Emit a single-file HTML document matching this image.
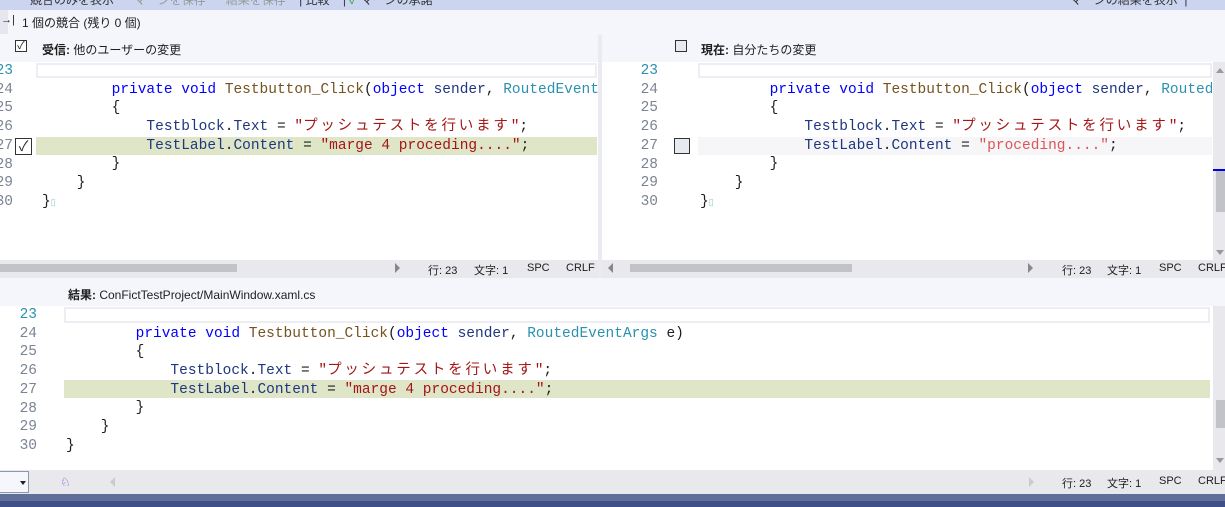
<!DOCTYPE html>
<html><head><meta charset="utf-8">
<style>
*{margin:0;padding:0;box-sizing:border-box}
body{width:1225px;height:507px;overflow:hidden;background:#f5f6fb;position:relative;font-family:"Liberation Sans","Noto Sans CJK JP",sans-serif;font-size:12px;color:#1e1e1e}
.a{position:absolute}
.code{font-family:"Liberation Mono","Noto Sans CJK JP",monospace;font-size:14.5px;line-height:18.7px;white-space:pre;height:18.7px}
.ln{font-family:"Liberation Mono",monospace;font-size:14.5px;line-height:18.7px;color:#7a8494;text-align:right}
.k{color:#0000ff}.m{color:#74531f}.p{color:#1f377f}.t{color:#2b91af}.s{color:#a31515}.j{letter-spacing:2.8px}
.cb{position:absolute;width:12px;height:12px;border:1px solid #333;background:#fff}
.sb{font-size:11px;color:#1e1e1e}
</style></head><body>
<!-- toolbar -->
<div class="a" style="left:0;top:0;width:1225px;height:10px;background:#ccd5f0;overflow:hidden">
<div class="a" style="left:30px;top:-9px;font-size:12px;color:#333;white-space:nowrap">競合のみを表示 &nbsp;&nbsp;&nbsp;&nbsp; <span style="color:#999">マージを保存 &nbsp;&nbsp;&nbsp;&nbsp; 結果を保存</span> &nbsp;&nbsp; | 比較 &nbsp;&nbsp; | <span style="color:#3a3">✓</span> マージの承諾</div>
<div class="a" style="left:1070px;top:-9px;font-size:12px;color:#333;white-space:nowrap">マージの結果を表示 &nbsp;|</div>
</div>
<div class="a" style="left:0;top:10px;width:8px;height:24px;background:#e6e7ee"></div>
<div class="a" style="left:1px;top:14px;font-size:11px">→|</div>
<div class="a" style="left:22px;top:14px;font-size:12px">1 個の競合 (残り 0 個)</div>

<!-- left pane -->
<div class="cb" style="left:15px;top:40px;font-size:11px;line-height:10px;text-align:center">✓</div>
<div class="a" style="left:42px;top:41px;font-size:12px"><b>受信:</b> 他のユーザーの変更</div>
<div class="a" style="left:0;top:62px;width:598px;height:198px;background:#fff"></div>
<div class="a" style="left:36px;top:63px;width:561px;height:15px;border:2px solid #eceef3"></div>
<div class="a" style="left:36px;top:137px;width:561px;height:18px;background:#dfe6c8"></div>
<div class="cb" style="left:15px;top:138px;width:17px;height:17px;font-size:14px;line-height:15px;text-align:center">✓</div>
<div class="a ln" style="left:-20px;top:62px;width:33px"><span style="color:#2b91af">23</span><br>24<br>25<br>26<br>27<br>28<br>29<br>30</div>
<div class="a" style="left:42px;top:62px;width:556px;height:198px;overflow:hidden">
<div class="code"> </div>
<div class="code">        <span class="k">private void</span> <span class="m">Testbutton_Click</span>(<span class="k">object</span> <span class="p">sender</span>, <span class="t">RoutedEventArgs</span> e)</div>
<div class="code">        {</div>
<div class="code">            <span class="p">Testblock</span>.<span class="p">Text</span> = <span class="s">"<span class="j">プッシュテストを行います</span>"</span>;</div>
<div class="code">            <span class="p">TestLabel</span>.<span class="p">Content</span> = <span class="s">"marge 4 proceding...."</span>;</div>
<div class="code">        }</div>
<div class="code">    }</div>
<div class="code">}<span style="color:#8cc;font-size:9px">▯</span></div>
</div>
<div class="a" style="left:0;top:260px;width:600px;height:18px;background:#e8e8ed"></div>
<div class="a" style="left:0;top:264px;width:237px;height:8px;background:#c2c3c9"></div>
<div class="a" style="left:395px;top:263px;width:0;height:0;border-left:5px solid #888;border-top:5px solid transparent;border-bottom:5px solid transparent"></div>
<div class="a sb" style="left:428px;top:262px">行: 23</div>
<div class="a sb" style="left:474px;top:262px">文字: 1</div>
<div class="a sb" style="left:527px;top:262px">SPC</div>
<div class="a sb" style="left:566px;top:262px">CRLF</div>
<div class="a" style="left:598px;top:35px;width:4px;height:243px;background:#eaebf0"></div>

<!-- right pane -->
<div class="cb" style="left:675px;top:40px;background:#e8eaf2"></div>
<div class="a" style="left:701px;top:41px;font-size:12px"><b>現在:</b> 自分たちの変更</div>
<div class="a" style="left:602px;top:62px;width:611px;height:198px;background:#fff"></div>
<div class="a" style="left:698px;top:63px;width:514px;height:15px;border:2px solid #eceef3"></div>
<div class="a" style="left:698px;top:137px;width:514px;height:18px;background:#f6f6f8"></div>
<div class="cb" style="left:674px;top:138px;width:16px;height:16px;background:#e8eaf2"></div>
<div class="a ln" style="left:620px;top:62px;width:38px"><span style="color:#2b91af">23</span><br>24<br>25<br>26<br>27<br>28<br>29<br>30</div>
<div class="a" style="left:700px;top:62px;width:512px;height:198px;overflow:hidden">
<div class="code"> </div>
<div class="code">        <span class="k">private void</span> <span class="m">Testbutton_Click</span>(<span class="k">object</span> <span class="p">sender</span>, <span class="t">RoutedEventArgs</span> e)</div>
<div class="code">        {</div>
<div class="code">            <span class="p">Testblock</span>.<span class="p">Text</span> = <span class="s">"<span class="j">プッシュテストを行います</span>"</span>;</div>
<div class="code">            <span class="p">TestLabel</span>.<span class="p">Content</span> = <span style="color:#d55">"proceding...."</span>;</div>
<div class="code">        }</div>
<div class="code">    }</div>
<div class="code">}<span style="color:#8cc;font-size:9px">▯</span></div>
</div>
<div class="a" style="left:1213px;top:62px;width:12px;height:198px;background:#e8e8ed"></div>
<div class="a" style="left:1216px;top:68px;border-bottom:5px solid #999;border-left:4px solid transparent;border-right:4px solid transparent"></div>
<div class="a" style="left:1213px;top:169px;width:12px;height:2px;background:#0000e0"></div>
<div class="a" style="left:1216px;top:171px;width:9px;height:41px;background:#c2c3c9"></div>
<div class="a" style="left:1216px;top:250px;border-top:5px solid #999;border-left:4px solid transparent;border-right:4px solid transparent"></div>
<div class="a" style="left:602px;top:260px;width:623px;height:18px;background:#e8e8ed"></div>
<div class="a" style="left:608px;top:263px;border-right:5px solid #888;border-top:5px solid transparent;border-bottom:5px solid transparent"></div>
<div class="a" style="left:630px;top:264px;width:222px;height:8px;background:#c2c3c9"></div>
<div class="a" style="left:1028px;top:263px;border-left:5px solid #888;border-top:5px solid transparent;border-bottom:5px solid transparent"></div>
<div class="a sb" style="left:1062px;top:262px">行: 23</div>
<div class="a sb" style="left:1107px;top:262px">文字: 1</div>
<div class="a sb" style="left:1159px;top:262px">SPC</div>
<div class="a sb" style="left:1198px;top:262px">CRLF</div>

<!-- result pane -->
<div class="a" style="left:68px;top:286px;font-size:12px"><b>結果:</b> ConFictTestProject/MainWindow.xaml.cs</div>
<div class="a" style="left:0;top:306px;width:1213px;height:164px;background:#fff"></div>
<div class="a" style="left:64px;top:307px;width:1146px;height:16px;border:2px solid #eceef3"></div>
<div class="a" style="left:64px;top:380px;width:1146px;height:18px;background:#dfe6c8"></div>
<div class="a ln" style="left:0;top:306px;width:37px"><span style="color:#2b91af">23</span><br>24<br>25<br>26<br>27<br>28<br>29<br>30</div>
<div class="a" style="left:66px;top:306px;width:1145px;height:164px;overflow:hidden">
<div class="code"> </div>
<div class="code">        <span class="k">private void</span> <span class="m">Testbutton_Click</span>(<span class="k">object</span> <span class="p">sender</span>, <span class="t">RoutedEventArgs</span> e)</div>
<div class="code">        {</div>
<div class="code">            <span class="p">Testblock</span>.<span class="p">Text</span> = <span class="s">"<span class="j">プッシュテストを行います</span>"</span>;</div>
<div class="code">            <span class="p">TestLabel</span>.<span class="p">Content</span> = <span class="s">"marge 4 proceding...."</span>;</div>
<div class="code">        }</div>
<div class="code">    }</div>
<div class="code">}</div>
</div>
<div class="a" style="left:1213px;top:306px;width:12px;height:164px;background:#e8e8ed"></div>
<div class="a" style="left:1216px;top:400px;width:9px;height:28px;background:#c2c3c9"></div>
<div class="a" style="left:1216px;top:458px;border-top:5px solid #999;border-left:4px solid transparent;border-right:4px solid transparent"></div>

<!-- bottom status -->
<div class="a" style="left:0;top:470px;width:1225px;height:24px;background:#e8e8ed"></div>
<div class="a" style="left:-2px;top:471px;width:31px;height:22px;background:#f5f7fd;border:1px solid #8a99b0"></div>
<div class="a" style="left:20px;top:481px;border-top:4px solid #222;border-left:3px solid transparent;border-right:3px solid transparent"></div>
<div class="a" style="left:60px;top:475px;color:#7a4fbf;font-size:12px">♘</div>
<div class="a" style="left:110px;top:477px;border-right:5px solid #ccc;border-top:5px solid transparent;border-bottom:5px solid transparent"></div>
<div class="a" style="left:1029px;top:477px;border-left:5px solid #ccc;border-top:5px solid transparent;border-bottom:5px solid transparent"></div>
<div class="a sb" style="left:1062px;top:475px">行: 23</div>
<div class="a sb" style="left:1107px;top:475px">文字: 1</div>
<div class="a sb" style="left:1159px;top:475px">SPC</div>
<div class="a sb" style="left:1198px;top:475px">CRLF</div>
<div class="a" style="left:0;top:494px;width:1225px;height:7px;background:#5f6f9a"></div>
<div class="a" style="left:0;top:501px;width:1225px;height:6px;background:#3f5088"></div>
</body></html>
